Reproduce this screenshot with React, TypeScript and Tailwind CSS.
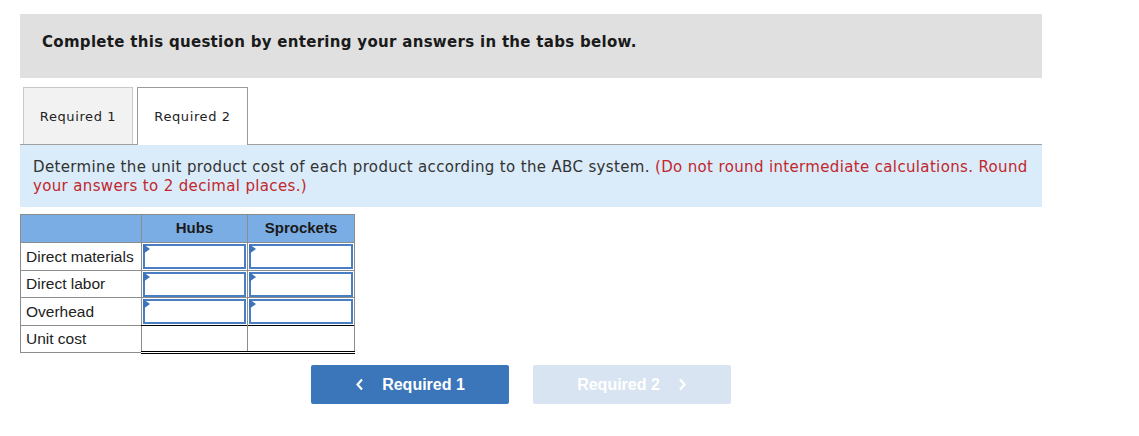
import React from 'react';

const rows = [
  { label: 'Direct materials', h: 'h-[28px]' },
  { label: 'Direct labor', h: 'h-[27px]' },
  { label: 'Overhead', h: 'h-[28px]' },
];

function InputCell() {
  return (
    <td className="border border-[#8c8c8c] p-0">
      <div className="relative h-[25px] mx-[1px] border-2 border-[#4a7ec2] bg-white">
        <span className="absolute -left-[2px] -top-[2px] w-0 h-0 border-t-[5px] border-b-[5px] border-l-[7px] border-t-transparent border-b-transparent border-l-[#3d73bb]" />
      </div>
    </td>
  );
}

export default function App() {
  return (
    <div className="w-[1139px] h-[436px] bg-white pt-[14px] pl-[20px] font-['DejaVu_Sans',sans-serif]">
      <div className="w-[1022px] h-[64px] bg-[#e0e0e0] pl-[22px] pt-[17px]">
        <p className="text-[15px] font-bold text-[#1a1a1a] tracking-[0.3px]">Complete this question by entering your answers in the tabs below.</p>
      </div>

      {/* Tabs */}
      <div className="w-[1022px] mt-[9px] flex items-end pl-[3px] border-b border-[#a0a0a0] h-[58px]">
        <div className="w-[110px] h-[57px] bg-[#f2f2f2] border border-b-0 border-[#c8c8c8] flex items-center justify-center pt-[2px] text-[13px] tracking-[0.6px] text-[#222]">Required 1</div>
        <div className="w-[111px] h-[58px] -mb-px ml-[4px] bg-white border border-b-0 border-[#9a9a9a] flex items-center justify-center pt-[1px] text-[13px] tracking-[0.6px] text-[#222]">Required 2</div>
      </div>

      <div className="w-[1022px] h-[62px] bg-[#daebf9] pl-[13px] pt-[13px] text-[15px] leading-[19px] tracking-[0.35px] text-[#333]">
        Determine the unit product cost of each product according to the ABC system.{' '}
        <span className="text-[#c1272d]">(Do not round intermediate calculations. Round your answers to 2 decimal places.)</span>
      </div>

      <table className="mt-[7px] border-collapse font-['Liberation_Sans',Arial,sans-serif] text-[15.5px] text-[#222]">
        <thead>
          <tr className="bg-[#7aade4] h-[28px]">
            <th className="w-[121px] border border-[#8c8c8c]" />
            <th className="w-[106px] border border-[#8c8c8c] font-bold text-[15px] text-[#1a1a1a]">Hubs</th>
            <th className="w-[107px] border border-[#8c8c8c] font-bold text-[15px] text-[#1a1a1a]">Sprockets</th>
          </tr>
        </thead>
        <tbody>
          {rows.map((r) => (
            <tr key={r.label} className={r.h}>
              <td className="border border-[#8c8c8c] px-[5px] whitespace-nowrap">{r.label}</td>
              <InputCell />
              <InputCell />
            </tr>
          ))}
          <tr className="h-[27px]">
            <td className="border border-[#8c8c8c] px-[5px]">Unit cost</td>
            <td className="border-x border-[#8c8c8c] border-t border-t-black border-b-[3px] border-b-black border-double p-0" />
            <td className="border-x border-[#8c8c8c] border-t border-t-black border-b-[3px] border-b-black border-double p-0" />
          </tr>
        </tbody>
      </table>

      <div className="flex gap-[24px] mt-[11px] ml-[291px] font-['Liberation_Sans',Arial,sans-serif]">
        <div className="w-[198px] h-[39px] rounded-[2px] bg-[#3a76b9] flex items-center justify-center gap-[18px] text-white text-[16px] font-bold">
          <svg width="9" height="13" viewBox="0 0 9 13"><path d="M7 1.5 L2.5 6.5 L7 11.5" stroke="white" strokeWidth="2.2" fill="none" /></svg>
          <span>Required 1</span>
        </div>
        <div className="w-[198px] h-[39px] rounded-[2px] bg-[#d8e4f1] flex items-center justify-center gap-[18px] text-white text-[16px] font-bold">
          <span>Required 2</span>
          <svg width="9" height="13" viewBox="0 0 9 13"><path d="M2 1.5 L6.5 6.5 L2 11.5" stroke="white" strokeWidth="2.2" fill="none" /></svg>
        </div>
      </div>
    </div>
  );
}
